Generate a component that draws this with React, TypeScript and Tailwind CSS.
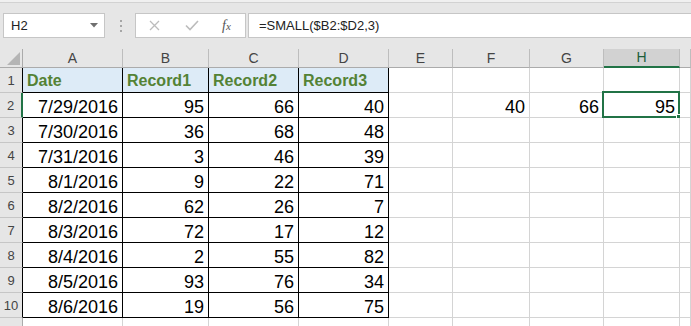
const cols = [
  { key: "A", w: "w-[100px]" },
  { key: "B", w: "w-[86px]" },
  { key: "C", w: "w-[90px]" },
  { key: "D", w: "w-[90px]" },
  { key: "E", w: "w-[64px]" },
  { key: "F", w: "w-[77px]" },
  { key: "G", w: "w-[74px]" },
  { key: "H", w: "w-[76px]" },
  { key: "I", w: "flex-1" },
];

const data: string[][] = [
  ["7/29/2016", "95", "66", "40"],
  ["7/30/2016", "36", "68", "48"],
  ["7/31/2016", "3", "46", "39"],
  ["8/1/2016", "9", "22", "71"],
  ["8/2/2016", "62", "26", "7"],
  ["8/3/2016", "72", "17", "12"],
  ["8/4/2016", "2", "55", "82"],
  ["8/5/2016", "93", "76", "34"],
  ["8/6/2016", "19", "56", "75"],
];

const extra: Record<string, string> = { F: "40", G: "66", H: "95" };

function cellValue(row: number, col: string) {
  const ci = "ABCD".indexOf(col);
  if (row === 1 && ci >= 0) return ["Date", "Record1", "Record2", "Record3"][ci];
  if (row >= 2 && row <= 10 && ci >= 0) return data[row - 2][ci];
  if (row === 2 && extra[col]) return extra[col];
  return "";
}

function Cell({ row, col, w }: { row: number; col: string; w: string }) {
  const inRange = row >= 1 && row <= 10 && "ABCD".includes(col);
  const header = row === 1 && inRange;
  const selected = row === 2 && col === "H";
  const value = cellValue(row, col);
  return (
    <div
      className={`relative flex h-full shrink-0 items-center border-r border-b ${w} ${
        inRange ? "border-black" : "border-[#d4d4d4]"
      } ${header ? "bg-[#ddebf7] justify-start pl-[4px]" : "bg-white justify-end pr-[4px]"}`}
    >
      {header ? (
        <span className="pt-[2px] text-[16px] font-bold leading-none text-[#548235]">{value}</span>
      ) : (
        <span className="pt-[3px] text-[18px] leading-none text-black">{value}</span>
      )}
      {selected && (
        <div className="absolute -top-[2px] -left-[2px] -right-[1px] -bottom-[1px] border-2 border-[#217346]">
          <div className="absolute -right-[4px] -bottom-[4px] h-[6px] w-[6px] border border-white bg-[#217346]" />
        </div>
      )}
    </div>
  );
}

export default function App() {
  const rows = Array.from({ length: 11 }, (_, i) => i + 1);
  return (
    <div
      className="h-[326px] w-[691px] overflow-hidden bg-[#e6e6e6]"
      style={{ fontFamily: '"Liberation Sans", Arial, sans-serif' }}
    >
      {/* Top chrome + formula bar */}
      <div className="h-[2px] bg-[#f0f0f0]" />
      <div className="h-[1px] bg-[#d2d2d2]" />
      <div className="flex h-[46px] items-start pt-[10px]">
        <div className="ml-[3px] flex h-[25px] w-[102px] items-center justify-between border border-[#c6c6c6] bg-white pl-[7px] pr-[6px]">
          <span className="text-[13px] text-[#222]">H2</span>
          <svg width="8" height="5" viewBox="0 0 8 5">
            <path d="M0 0h8L4 4.5z" fill="#6f6f6f" />
          </svg>
        </div>
        <div className="ml-[14px] flex h-[25px] w-[3px] flex-col items-center justify-center gap-[3px]">
          <div className="h-[2px] w-[2px] bg-[#a6a6a6]" />
          <div className="h-[2px] w-[2px] bg-[#a6a6a6]" />
          <div className="h-[2px] w-[2px] bg-[#a6a6a6]" />
        </div>
        <div className="ml-[13px] flex h-[25px] w-[111px] items-center border border-[#c6c6c6] bg-white">
          <svg className="ml-[13px]" width="11" height="11" viewBox="0 0 11 11">
            <path d="M1 1l9 9M10 1l-9 9" stroke="#bcbcbc" strokeWidth="1.3" />
          </svg>
          <svg className="ml-[25px]" width="14" height="11" viewBox="0 0 14 11">
            <path d="M1 5.5l4 4L13 1" stroke="#bcbcbc" strokeWidth="1.6" fill="none" />
          </svg>
          <span
            className="ml-[23px] text-[14px] italic text-[#555]"
            style={{ fontFamily: '"Liberation Serif", "Times New Roman", serif' }}
          >
            f<span className="text-[11px]">x</span>
          </span>
        </div>
        <div className="ml-[2px] flex h-[25px] flex-1 items-center border-y border-l border-[#c6c6c6] bg-white pl-[10px]">
          <span className="text-[13px] text-[#222]">=SMALL($B2:$D2,3)</span>
        </div>
      </div>

      {/* Column headers */}
      <div className="flex h-[19px]">
        <div className="relative w-[23px] shrink-0 border-r border-b border-[#ababab]">
          <svg className="absolute right-[2px] bottom-[2px]" width="13" height="13" viewBox="0 0 13 13">
            <path d="M13 0v13H0z" fill="#b5b5b5" />
          </svg>
        </div>
        {cols.map((c) => (
          <div
            key={c.key}
            className={`flex shrink-0 items-center justify-center border-r text-[14px] ${c.w} ${
              c.key === "H"
                ? "border-b-2 border-r-[#bdbdbd] border-b-[#217346] bg-[#d2d2d2] text-[#1d5e3a]"
                : "border-b border-r-[#bdbdbd] border-b-[#ababab] text-[#444]"
            }`}
          >
            {c.key === "I" ? "" : c.key}
          </div>
        ))}
      </div>

      {/* Rows */}
      {rows.map((r) => (
        <div key={r} className="flex h-[25px]">
          <div
            className={`flex w-[23px] shrink-0 items-center justify-center pt-[2px] text-[13px] text-[#444] ${
              r === 2
                ? "border-r-2 border-b border-r-[#217346] border-b-[#c6c6c6] bg-[#e6e6e6]"
                : r <= 10
                ? "border-r border-b border-r-black border-b-[#c6c6c6]"
                : "border-r border-b border-r-[#ababab] border-b-[#c6c6c6]"
            }`}
          >
            {r <= 10 ? r : ""}
          </div>
          {cols.map((c) => (
            <Cell key={c.key} row={r} col={c.key} w={c.w} />
          ))}
        </div>
      ))}
    </div>
  );
}
